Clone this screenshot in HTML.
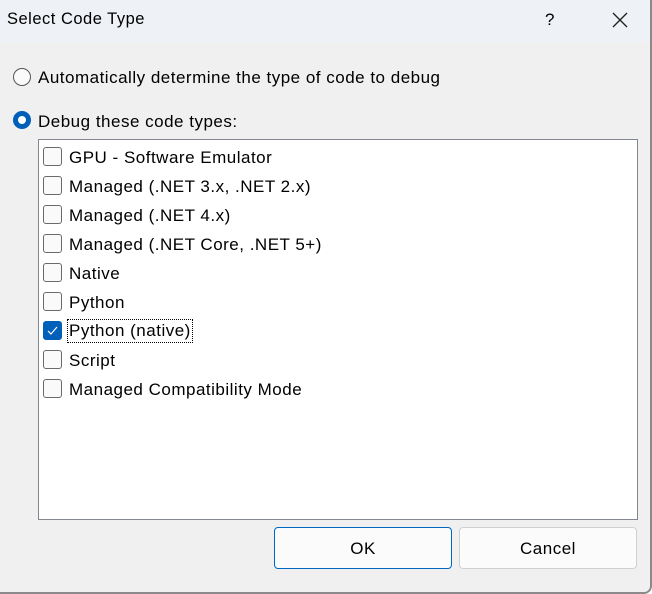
<!DOCTYPE html>
<html><head><style>
body{margin:0;width:652px;height:594px;overflow:hidden;background:#fff;font-family:"Liberation Sans",sans-serif;}
.win{position:absolute;left:0;top:0;width:650px;height:592px;background:#f0f0f0;border-right:2px solid #8a8a8a;border-bottom:2px solid #8a8a8a;border-bottom-right-radius:8px;overflow:hidden}
.title{position:absolute;left:0;top:0;width:650px;height:42px;background:#eef1f5;}
.t{position:absolute;font-size:17px;letter-spacing:0.5px;color:#000;white-space:nowrap}
.radio{position:absolute;width:16px;height:16px;border-radius:50%;border:1px solid #555;background:#fafafa}
.list{position:absolute;left:38px;top:139px;width:598px;height:379px;background:#fff;border:1px solid #828790}
.cb{position:absolute;left:4px;width:17px;height:17px;border:1px solid #6a6a6a;border-radius:3px;background:#fafafa}
.btn{position:absolute;top:527px;height:40px;width:176px;background:#fbfbfb;border:1px solid #d0d0d0;border-radius:4px;text-align:center;line-height:42px;font-size:17px;letter-spacing:0.5px}
</style></head><body><div class="win">
<div class="title"></div>
<div class="t" style="left:7px;top:10px;font-size:16.5px">Select Code Type</div>
<div class="t" style="left:545px;top:10px">?</div>
<svg style="position:absolute;left:612px;top:12px" width="16" height="16"><path d="M1 1L15 15M15 1L1 15" stroke="#222" stroke-width="1.4"/></svg>
<div class="radio" style="left:13px;top:68px"></div>
<div class="t" style="left:38px;top:68px">Automatically determine the type of code to debug</div>
<div class="radio" style="left:13px;top:111px;background:#005fb8;border-color:#005fb8"><div style="position:absolute;left:4px;top:4px;width:8px;height:8px;border-radius:50%;background:#fff"></div></div>
<div class="t" style="left:38px;top:112px">Debug these code types:</div>
<div class="list">
<div class="cb" style="top:7px"></div><div class="t" style="left:30px;top:8px">GPU - Software Emulator</div>
<div class="cb" style="top:36px"></div><div class="t" style="left:30px;top:37px">Managed (.NET 3.x, .NET 2.x)</div>
<div class="cb" style="top:65px"></div><div class="t" style="left:30px;top:66px">Managed (.NET 4.x)</div>
<div class="cb" style="top:94px"></div><div class="t" style="left:30px;top:95px">Managed (.NET Core, .NET 5+)</div>
<div class="cb" style="top:123px"></div><div class="t" style="left:30px;top:124px">Native</div>
<div class="cb" style="top:152px"></div><div class="t" style="left:30px;top:153px">Python</div>
<div class="cb" style="top:181px;background:#005fb8;border-color:#005fb8"><svg width="17" height="17" style="position:absolute;left:0;top:0"><path d="M4 9L7 12L13 5" stroke="#fff" stroke-width="1.2" fill="none"/></svg></div>
<div class="t" style="left:28px;top:179px;padding:1px 1px 1px 1px;border:1px dotted #000">Python (native)</div>
<div class="cb" style="top:210px"></div><div class="t" style="left:30px;top:211px">Script</div>
<div class="cb" style="top:239px"></div><div class="t" style="left:30px;top:240px">Managed Compatibility Mode</div>
</div>
<div class="btn" style="left:274px;border-color:#0067c0">OK</div>
<div class="btn" style="left:459px">Cancel</div>
</div></body></html>
